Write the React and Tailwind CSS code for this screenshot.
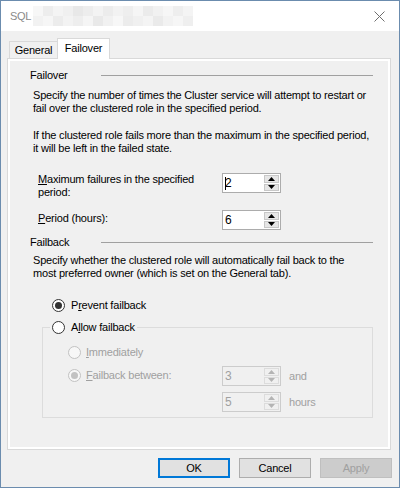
import React from 'react';

const blurRows = [
  ['#f7f7f7', '#ededed', '#f4f4f4', '#f0f0f0', '#e8e8e8', '#ededed', '#f3f3f3', '#ececec', '#f2f2f2', '#eeeeee', '#f5f5f5', '#ebebeb', '#f1f1f1', '#f6f6f6', '#eeeeee', '#f4f4f4'],
  ['#f2f2f2', '#f6f6f6', '#ececec', '#f3f3f3', '#eeeeee', '#f5f5f5', '#e9e9e9', '#f1f1f1', '#f7f7f7', '#ececec', '#f0f0f0', '#f4f4f4', '#eaeaea', '#f2f2f2', '#f6f6f6', '#efefef'],
];

const Arrow = ({ up, disabled }) => (
  <svg width="7" height="4" viewBox="0 0 7 4">
    <path
      d={up ? 'M0 4 L3.5 0 L7 4 Z' : 'M0 0 L3.5 4 L7 0 Z'}
      fill={disabled ? '#b4b4b4' : '#000000'}
    />
  </svg>
);

const SpinBox = ({ value, disabled, caret }) => (
  <div
    className={
      disabled
        ? 'flex w-[59px] h-[20px] border border-[#cccccc] bg-[#f0f0f0]'
        : 'flex w-[59px] h-[20px] border border-[#acacac] bg-white'
    }
  >
    <div className={disabled ? 'flex-1 flex items-center pl-[2px] text-[#a0a0a0]' : 'flex-1 flex items-center pl-[2px]'}>
      {caret && <span className="w-px h-[13px] bg-black -mr-px" />}
      <span className="text-[12px]">{value}</span>
    </div>
    <div className="flex flex-col w-[16px] py-px pr-px gap-px">
      <div
        className={
          disabled
            ? 'flex-1 flex items-center justify-center border border-[#dcdcdc] bg-[#f0f0f0]'
            : 'flex-1 flex items-center justify-center border border-[#c8c8c8] bg-[#e6e6e6]'
        }
      >
        <Arrow up disabled={disabled} />
      </div>
      <div
        className={
          disabled
            ? 'flex-1 flex items-center justify-center border border-[#dcdcdc] bg-[#f0f0f0]'
            : 'flex-1 flex items-center justify-center border border-[#c8c8c8] bg-[#e6e6e6]'
        }
      >
        <Arrow disabled={disabled} />
      </div>
    </div>
  </div>
);

const Radio = ({ checked, disabled }) => (
  <span
    className={
      disabled
        ? 'w-[13px] h-[13px] shrink-0 rounded-full border border-[#c2c2c2] bg-[#f7f7f7] flex items-center justify-center'
        : 'w-[13px] h-[13px] shrink-0 rounded-full border border-[#333333] bg-white flex items-center justify-center'
    }
  >
    {checked && (
      <span className={disabled ? 'w-[7px] h-[7px] rounded-full bg-[#c2c2c2]' : 'w-[7px] h-[7px] rounded-full bg-[#333333]'} />
    )}
  </span>
);

const GroupHeader = ({ title }) => (
  <div className="flex items-center pl-[20px] pr-[15px]">
    <span className="w-[71px]">{title}</span>
    <div className="flex-1 h-px bg-[#a0a0a0]" />
  </div>
);

const Button = ({ children, variant }) => {
  const cls = {
    primary: 'w-[72px] h-[20px] border-2 border-[#0078d7] bg-[#e1e1e1] flex items-center justify-center',
    normal: 'w-[72px] h-[20px] border border-[#adadad] bg-[#e1e1e1] flex items-center justify-center',
    disabled: 'w-[72px] h-[20px] border border-[#bfbfbf] bg-[#cccccc] text-[#a0a0a0] flex items-center justify-center',
  }[variant];
  return <div className={cls}>{children}</div>;
};

export default function App() {
  return (
    <div className="w-[400px] h-[488px] border border-[#6b8cae] bg-[#f0f0f0] flex flex-col font-['Liberation_Sans',Arial,sans-serif] text-[11px] leading-[13px] tracking-[-0.2px] text-black overflow-hidden">
      {/* Title bar */}
      <div className="h-[30px] bg-white flex items-center pl-[9px] pr-[10px] shrink-0">
        <span className="w-[23px] text-[11px] text-[#8a8a8a] tracking-[-0.3px]">SQL</span>
        <div className="flex flex-col">
          {blurRows.map((row, i) => (
            <div key={i} className="flex">
              {row.map((c, j) => (
                <div key={j} className="w-[10px] h-[10px]" style={{ backgroundColor: c }} />
              ))}
            </div>
          ))}
        </div>
        <div className="flex-1" />
        <svg width="11" height="11" viewBox="0 0 11 11" className="mr-[4px]">
          <path d="M0.5 0.5 L10.5 10.5 M10.5 0.5 L0.5 10.5" stroke="#6e6e6e" strokeWidth="1" />
        </svg>
      </div>

      {/* Tabs */}
      <div className="h-[27px] flex items-end pl-[8px] shrink-0">
        <div className="w-[49px] h-[17px] border border-b-0 border-[#d9d9d9] bg-[#f0f0f0] flex items-center justify-center">
          General
        </div>
        <div className="relative z-10 -ml-px -mb-px w-[53px] h-[21px] border border-b-0 border-[#d9d9d9] bg-white flex items-center justify-center pb-[2px]">
          Failover
        </div>
      </div>

      {/* Panel */}
      <div className="ml-[6px] w-[384px] h-[392px] border border-[#d9d9d9] bg-white p-[2px] shrink-0">
        <div className="h-full bg-[#f0f0f0] flex flex-col pt-[8px]">
          <GroupHeader title="Failover" />

          <p className="mt-[7px] pl-[23px] whitespace-nowrap">
            Specify the number of times the Cluster service will attempt to restart or
            <br />
            fail over the clustered role in the specified period.
          </p>
          <p className="mt-[14px] pl-[23px] whitespace-nowrap">
            If the clustered role fails more than the maximum in the specified period,
            <br />
            it will be left in the failed state.
          </p>

          <div className="mt-[18px] pl-[28px] flex items-start">
            <div className="w-[184px]">
              <span className="underline underline-offset-[1px]">M</span>aximum failures in the specified
              <br />
              period:
            </div>
            <SpinBox value="2" caret />
          </div>

          <div className="mt-[11px] pl-[28px] flex items-start">
            <div className="w-[184px] pt-[2px]">
              <span className="underline underline-offset-[1px]">P</span>eriod (hours):
            </div>
            <SpinBox value="6" />
          </div>

          <div className="mt-[6px]">
            <GroupHeader title="Failback" />
          </div>

          <p className="mt-[5px] pl-[23px] whitespace-nowrap">
            Specify whether the clustered role will automatically fail back to the
            <br />
            most preferred owner (which is set on the General tab).
          </p>

          <div className="mt-[19px] pl-[42px] flex items-center gap-[6px]">
            <Radio checked />
            <span>
              P<span className="underline underline-offset-[1px]">r</span>event failback
            </span>
          </div>

          <fieldset className="mt-[9px] ml-[32px] w-[331px] border border-[#dcdcdc] pb-[5px]">
            <legend className="ml-[7px] px-[2px] flex items-center gap-[6px]">
              <Radio />
              <span>
                A<span className="underline underline-offset-[1px]">l</span>low failback
              </span>
            </legend>

            <div className="mt-[12px] pl-[25px] flex items-center gap-[5px] text-[#a0a0a0]">
              <Radio disabled />
              <span>
                <span className="underline underline-offset-[1px]">I</span>mmediately
              </span>
            </div>

            <div className="mt-[7px] pl-[25px] flex items-center text-[#a0a0a0]">
              <div className="w-[154px] flex items-center gap-[5px] -mt-[2px]">
                <Radio checked disabled />
                <span>
                  <span className="underline underline-offset-[1px]">F</span>ailback between:
                </span>
              </div>
              <SpinBox value="3" disabled />
              <span className="ml-[8px]">and</span>
            </div>

            <div className="mt-[6px] pl-[179px] flex items-center text-[#a0a0a0]">
              <SpinBox value="5" disabled />
              <span className="ml-[8px]">hours</span>
            </div>
          </fieldset>
        </div>
      </div>

      {/* Buttons */}
      <div className="mt-[8px] flex justify-end pr-[7px] gap-[9px]">
        <Button variant="primary">OK</Button>
        <Button variant="normal">Cancel</Button>
        <Button variant="disabled">Apply</Button>
      </div>
    </div>
  );
}
